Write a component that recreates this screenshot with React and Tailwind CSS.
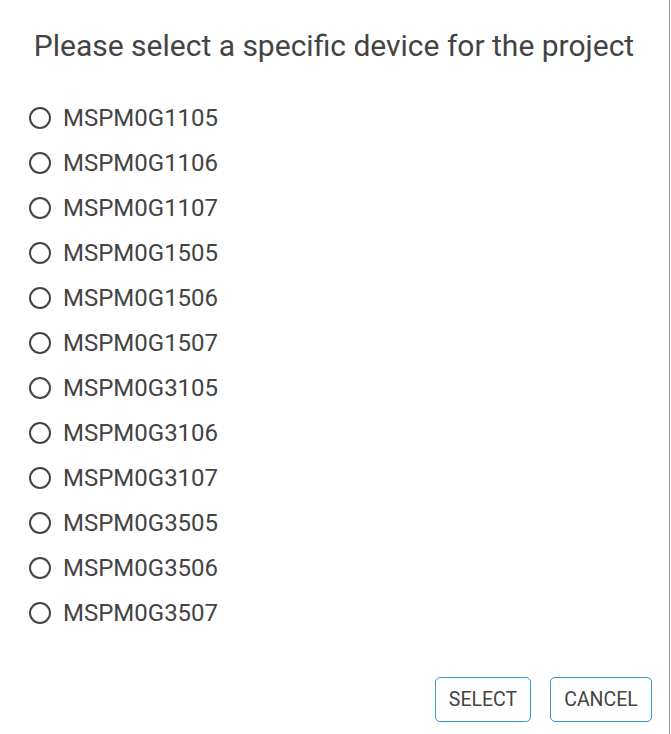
import { useState } from "react";

const devices = [
  "MSPM0G1105",
  "MSPM0G1106",
  "MSPM0G1107",
  "MSPM0G1505",
  "MSPM0G1506",
  "MSPM0G1507",
  "MSPM0G3105",
  "MSPM0G3106",
  "MSPM0G3107",
  "MSPM0G3505",
  "MSPM0G3506",
  "MSPM0G3507",
];

const App = () => {
  const [selected, setSelected] = useState(null);

  return (
    <div
      className="w-[671px] h-[734px] bg-white text-[#444444] flex"
      style={{ fontFamily: "Roboto, 'Liberation Sans', sans-serif" }}
    >
      <div className="w-[670px] h-full border-r border-[#9a9a9a] flex flex-col">
        {/* Title */}
        <h1 className="text-[30px] text-center pt-[26px] leading-[40px] pr-[1px]">
          Please select a specific device for the project
        </h1>

        {/* Device list */}
        <div className="mt-[29px] pl-[29px] flex flex-col">
          {devices.map((d) => (
            <label
              key={d}
              className="h-[45px] flex items-center gap-[12px] cursor-pointer"
              onClick={() => setSelected(d)}
            >
              <span className="w-[22px] h-[22px] rounded-full border-2 border-[#444444] flex items-center justify-center">
                {selected === d && (
                  <span className="w-[12px] h-[12px] rounded-full bg-[#444444]" />
                )}
              </span>
              <span className="text-[24px] leading-[28px]">{d}</span>
            </label>
          ))}
        </div>

        {/* Actions */}
        <div className="mt-auto mb-[12px] flex justify-end gap-[19px] pr-[17px]">
          <button className="w-[96px] h-[45px] border border-[#3a96d0] rounded-[5px] text-[19.5px]">
            SELECT
          </button>
          <button className="w-[102px] h-[45px] border border-[#3a96d0] rounded-[5px] text-[19.5px]">
            CANCEL
          </button>
        </div>
      </div>
    </div>
  );
};

export default App;
